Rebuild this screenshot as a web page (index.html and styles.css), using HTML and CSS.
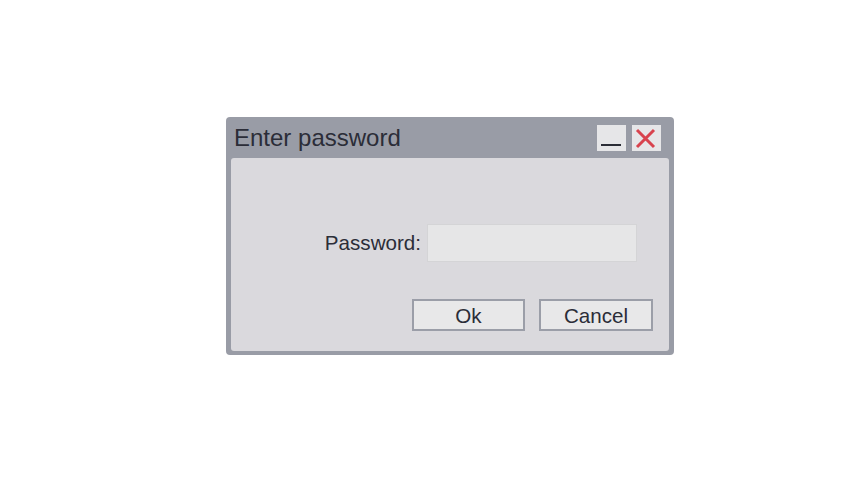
FILE: index.html
```html
<!DOCTYPE html>
<html>
<head>
<meta charset="utf-8">
<link rel="stylesheet" href="styles.css">
</head>
<body>
<div class="page">
  <div class="dialog">
    <div class="titlebar">
      <span class="title">Enter password</span>
      <div class="controls">
        <button class="ctl min" aria-label="Minimize">
          <svg width="29" height="26" viewBox="0 0 29 26"><rect x="4" y="19" width="20" height="2" fill="#2b2d36"/></svg>
        </button>
        <button class="ctl close" aria-label="Close">
          <svg width="29" height="26" viewBox="0 0 29 26"><path d="M5 5 L22 22 M22 5 L5 22" stroke="#d8434e" stroke-width="3" stroke-linecap="butt"/></svg>
        </button>
      </div>
    </div>
    <div class="panel">
      <div class="field">
        <label class="label" for="pw">Password:</label>
        <input id="pw" class="input" type="password">
      </div>
      <div class="actions">
        <button class="btn">Ok</button>
        <button class="btn">Cancel</button>
      </div>
    </div>
  </div>
</div>
</body>
</html>
```
FILE: styles.css
```css
html, body {
  margin: 0;
  padding: 0;
  background: #ffffff;
}
.page {
  padding: 117px 0 0 226px;
  font-family: "Liberation Sans", Arial, sans-serif;
  color: #2b2d38;
}
.dialog {
  width: 448px;
  height: 238px;
  box-sizing: border-box;
  background: #999ca6;
  border-radius: 4px;
  padding: 0 5px 4px 5px;
  display: flex;
  flex-direction: column;
}
.titlebar {
  height: 41px;
  display: flex;
  align-items: flex-start;
  justify-content: space-between;
}
.title {
  font-size: 24px;
  line-height: 24px;
  margin-top: 9px;
  margin-left: 3px;
  color: #2b2d38;
}
.controls {
  display: flex;
  gap: 6px;
  margin-top: 8px;
  margin-right: 8px;
}
.ctl {
  width: 29px;
  height: 26px;
  padding: 0;
  border: none;
  background: #e6e6e8;
  display: block;
}
.ctl svg { display: block; }
.panel {
  flex: 1;
  background: #dad9dd;
  border-radius: 3px;
  display: flex;
  flex-direction: column;
}
.field {
  display: flex;
  align-items: center;
  justify-content: flex-end;
  margin-top: 66px;
  margin-right: 32px;
  gap: 6px;
}
.label {
  font-size: 20.6px;
  color: #2b2d38;
}
.input {
  width: 210px;
  height: 38px;
  box-sizing: border-box;
  background: #e6e6e7;
  border: 1px solid #d4d4d6;
  margin: 0;
  padding: 0;
}
.actions {
  display: flex;
  justify-content: flex-end;
  gap: 14px;
  margin-top: 37px;
  margin-right: 16px;
}
.btn {
  width: 114px;
  height: 32px;
  box-sizing: border-box;
  background: #e8e8e9;
  border: 2px solid #9b9ea8;
  font-family: "Liberation Sans", Arial, sans-serif;
  font-size: 20.6px;
  color: #2b2d38;
  padding: 1px 0 0 0;
}
.btn:first-child { width: 113px; }
```
